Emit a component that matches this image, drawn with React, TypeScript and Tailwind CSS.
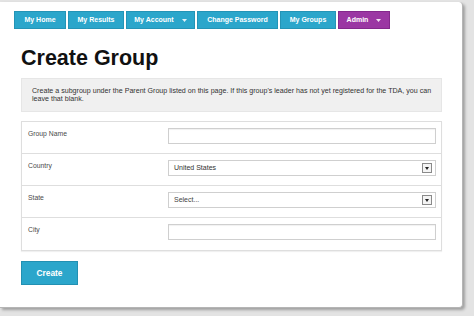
import React from "react";

const navItems: { label: string; w: number; purple?: boolean; caret?: boolean }[] = [
  { label: "My Home", w: 52 },
  { label: "My Results", w: 56 },
  { label: "My Account", w: 69, caret: true },
  { label: "Change Password", w: 81 },
  { label: "My Groups", w: 56 },
  { label: "Admin", w: 52, purple: true, caret: true },
];

function Caret() {
  return (
    <svg width="5" height="3" viewBox="0 0 5 3" className="ml-[8px]">
      <path d="M0 0 L5 0 L2.5 3 Z" fill="#ffffff" fillOpacity="0.85" />
    </svg>
  );
}

function SelectArrow() {
  return (
    <div className="absolute right-[3px] top-1/2 -translate-y-1/2 w-[10px] h-[10px] border border-[#8a8a8a] bg-[#f4f4f4] flex items-center justify-center">
      <svg width="4" height="3" viewBox="0 0 4 3">
        <path d="M0 0 L4 0 L2 3 Z" fill="#222" />
      </svg>
    </div>
  );
}

function Row({ label, children, last }: { label: string; children: React.ReactNode; last?: boolean }) {
  return (
    <div className={`flex h-[32px] ${last ? "" : "border-b border-[#dedede]"}`}>
      <div className="w-[146px] pl-[6px] pt-[8px] text-[6.8px] leading-[8px] text-[#4a4a4a]">{label}</div>
      <div className="flex-1 pt-[6px] pr-[5px]">{children}</div>
    </div>
  );
}

export default function App() {
  return (
    <div
      className="w-[474px] h-[316px] bg-[#e3e3e3] overflow-hidden"
      style={{ fontFamily: '"Liberation Sans", Arial, sans-serif' }}
    >
      <div className="mt-[2px] w-[463px] h-[306px] bg-white rounded-r-[4px] border-r border-b border-[#b5b5b5] shadow-[2px_2px_3px_rgba(0,0,0,0.3)]">
        <div className="flex gap-[2px] pt-[9px] pl-[14px]">
          {navItems.map((n) => (
            <div
              key={n.label}
              className={`h-[18px] flex items-center justify-center text-white font-bold text-[7px] border ${
                n.purple ? "bg-[#9b37a3] border-[#84288c]" : "bg-[#2ba6cb] border-[#2494b6]"
              }`}
              style={{ width: n.w }}
            >
              {n.label}
              {n.caret && <Caret />}
            </div>
          ))}
        </div>

        <div className="pl-[21px] pr-[20px]">
          <h1 className="mt-[17px] text-[21.5px] leading-[24px] font-bold text-[#111]">Create Group</h1>

          <div className="mt-[8px] h-[34px] bg-[#f0f0f0] border border-[#e6e6e6] pl-[10px] pr-[5px] pt-[9px] text-[7.1px] leading-[7.6px] text-[#333]">
            Create a subgroup under the Parent Group listed on this page. If this group's leader has not yet registered for the TDA, you can leave that blank.
          </div>

          <div className="mt-[9px] border border-[#dedede] shadow-[0_1px_1px_rgba(0,0,0,0.06)]">
            <Row label="Group Name">
              <div className="h-[16px] border border-[#cfcfcf] shadow-[inset_0_1px_1px_rgba(0,0,0,0.06)]" />
            </Row>
            <Row label="Country">
              <div className="relative h-[16px] border border-[#cfcfcf] flex items-center pl-[5px] text-[7px] text-[#333]">
                United States
                <SelectArrow />
              </div>
            </Row>
            <Row label="State">
              <div className="relative h-[16px] border border-[#cfcfcf] flex items-center pl-[5px] text-[7px] text-[#444]">
                Select...
                <SelectArrow />
              </div>
            </Row>
            <Row label="City" last>
              <div className="h-[16px] border border-[#cfcfcf] shadow-[inset_0_1px_1px_rgba(0,0,0,0.06)]" />
            </Row>
          </div>

          <div className="mt-[10px] w-[57px] h-[24px] bg-[#2ba6cb] border border-[#2290b2] flex items-center justify-center text-white font-bold text-[8.4px]">
            Create
          </div>
        </div>
      </div>
    </div>
  );
}
